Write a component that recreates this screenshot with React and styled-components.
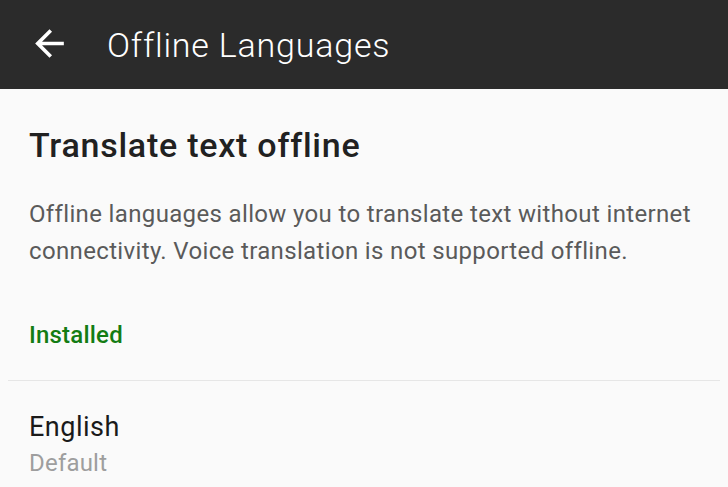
import React from 'react'
import styled, { createGlobalStyle } from 'styled-components'

const GlobalStyle = createGlobalStyle`
  html, body {
    margin: 0;
    padding: 0;
    background: #fafafa;
    font-family: Roboto, 'Noto Sans', sans-serif;
  }
`

const Page = styled.div`
  width: 728px;
  height: 487px;
  overflow: hidden;
  background: #fafafa;
`

const AppBar = styled.header`
  height: 89px;
  background: #2b2b2b;
  display: flex;
  align-items: center;
  padding-left: 28px;
`

const BackButton = styled.button`
  width: 43px;
  height: 43px;
  padding: 0;
  border: 0;
  background: none;
  display: flex;
  color: #fff;
  margin-top: -3px;
`

const BarTitle = styled.h1`
  margin: 0 0 0 36px;
  font-size: 34px;
  line-height: 40px;
  font-weight: 300;
  letter-spacing: 0.8px;
  color: #fff;
`

const Content = styled.main`
  padding-top: 36px;
`

const Section = styled.section`
  padding: 0 29px;
`

const Heading = styled.h2`
  margin: 0;
  font-size: 34px;
  line-height: 40px;
  font-weight: 500;
  letter-spacing: 0.75px;
  color: #212121;
`

const Description = styled.p`
  margin: 31px 0 0;
  font-size: 24px;
  line-height: 37px;
  letter-spacing: 0.35px;
  color: #5a5a5a;
`

const GroupLabel = styled.div`
  margin-top: 50px;
  font-size: 24px;
  line-height: 30px;
  font-weight: 500;
  letter-spacing: 0.2px;
  color: #137c13;
`

const Divider = styled.hr`
  margin: 30px 8px 0;
  border: 0;
  height: 1px;
  background: #e6e6e6;
`

const LanguageRow = styled.div`
  padding: 29px 29px 0;
  display: flex;
  flex-direction: column;
  gap: 4px;
`

const LanguageName = styled.span`
  font-size: 27px;
  line-height: 34px;
  letter-spacing: 0.5px;
  color: #1a1a1a;
`

const LanguageNote = styled.span`
  font-size: 24px;
  line-height: 30px;
  letter-spacing: 0.2px;
  color: #9e9e9e;
`

const ArrowBack = () => (
  <svg width='43' height='43' viewBox='0 0 24 24' fill='currentColor'>
    <path d='M20 11H7.83l5.59-5.59L12 4l-8 8 8 8 1.41-1.41L7.83 13H20v-2z' />
  </svg>
)

const App = () => {
  return (
    <Page>
      <GlobalStyle />
      <AppBar>
        <BackButton aria-label='Back'>
          <ArrowBack />
        </BackButton>
        <BarTitle>Offline Languages</BarTitle>
      </AppBar>
      <Content>
        <Section>
          <Heading>Translate text offline</Heading>
          <Description>
            Offline languages allow you to translate text without internet
            connectivity. Voice translation is not supported offline.
          </Description>
          <GroupLabel>Installed</GroupLabel>
        </Section>
        <Divider />
        <LanguageRow>
          <LanguageName>English</LanguageName>
          <LanguageNote>Default</LanguageNote>
        </LanguageRow>
      </Content>
    </Page>
  )
}

export default App
